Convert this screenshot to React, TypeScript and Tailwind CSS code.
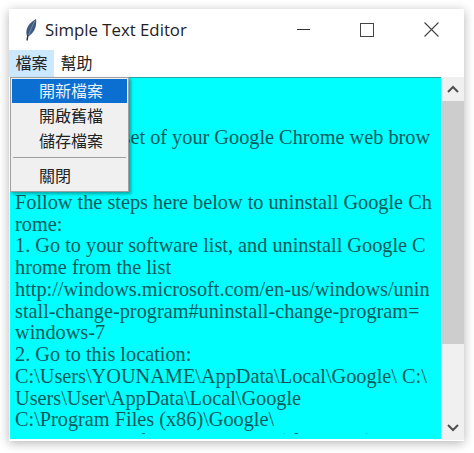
import React from 'react';

const lines = [
  'How to',
  'reinstall',
  'Do a clean reset of your Google Chrome web brow',
  'ser',
  '',
  'Follow the steps here below to uninstall Google Ch',
  'rome:',
  '1. Go to your software list, and uninstall Google C',
  'hrome from the list',
  'http://windows.microsoft.com/en-us/windows/unin',
  'stall-change-program#uninstall-change-program=',
  'windows-7',
  '2. Go to this location:',
  'C:\\Users\\YOUNAME\\AppData\\Local\\Google\\ C:\\',
  'Users\\User\\AppData\\Local\\Google',
  'C:\\Program Files (x86)\\Google\\',
  'And delete the folder "Chrome" (if it exists) there and',
];

const menuItems = ['開新檔案', '開啟舊檔', '儲存檔案'];

const Feather = () => (
  <svg width="14" height="22" viewBox="0 0 14 22">
    <path d="M3 17 C1 12 3 5 12 0 C13 6 11 13 5 17 Z" fill="#3f5a80" />
    <path d="M11 2 C8 7 6 12 4.500 17" stroke="#7f97b5" strokeWidth="0.8" fill="none" />
    <path d="M4 16 L3 21.500" stroke="#2a3442" strokeWidth="1.400" fill="none" />
  </svg>
);

const App: React.FC = () => {
  return (
    <div className="w-[474px] h-[453px] bg-white pt-[9px] pl-[9px] overflow-hidden">
      <div className="relative w-[455px] h-[432px] bg-white flex flex-col shadow-[0_2px_10px_rgba(0,0,0,0.3)] font-['Noto_Sans_CJK_TC','Noto_Sans_CJK_JP',sans-serif]">
        <div className="h-[41px] flex items-center shrink-0">
          <div className="ml-[15px] w-[14px] flex"><Feather /></div>
          <span className="ml-[7px] text-[16.800px] text-[#222] font-['Open_Sans','Noto_Sans',sans-serif]">Simple Text Editor</span>
          <div className="ml-auto flex items-center h-full mr-[1px]">
            <div className="w-[64px] flex justify-center"><div className="w-[13px] h-px bg-[#333]" /></div>
            <div className="w-[64px] flex justify-center"><div className="w-[14px] h-[14px] border border-[#444]" /></div>
            <div className="w-[64px] flex justify-center">
              <svg width="15" height="15" viewBox="0 0 15 15" stroke="#444" strokeWidth="1.100">
                <path d="M0.500 0.500 L14.500 14.500 M14.500 0.500 L0.500 14.500" />
              </svg>
            </div>
          </div>
        </div>
        <div className="h-[27px] flex items-stretch shrink-0 text-[16px] text-[#222]">
          <div className="w-[45px] bg-[#cce8ff] flex items-center justify-center pb-[3px]">檔案</div>
          <div className="ml-[1px] w-[43px] flex items-center justify-center pb-[3px]">幫助</div>
        </div>
        <div className="flex h-[363px] shrink-0">
          <div className="w-[431px] ml-px mb-px bg-[#00ffff] border-t border-[#1fa5a5] pl-[5px] pt-[5px] pb-[5px]">
            <div className="h-full overflow-hidden font-['Liberation_Serif',serif] text-[20.300px] leading-[21.750px] text-[#075a5c] whitespace-pre">
              {lines.map((line, i) => (
                <div key={i} className="h-[21.750px]">{line}</div>
              ))}
            </div>
          </div>
          <div className="w-[22px] ml-px bg-[#f0f0f0] flex flex-col items-stretch">
            <div className="h-[24px] flex items-center justify-center">
              <svg width="12" height="8" viewBox="0 0 12 8" fill="none" stroke="#505050" strokeWidth="2"><path d="M1 7 L6 2 L11 7" /></svg>
            </div>
            <div className="h-[243px] bg-[#cdcdcd]" />
            <div className="mt-auto h-[24px] flex items-center justify-center">
              <svg width="12" height="8" viewBox="0 0 12 8" fill="none" stroke="#505050" strokeWidth="2"><path d="M1 1 L6 6 L11 1" /></svg>
            </div>
          </div>
        </div>
        <div className="absolute left-px top-[68px] w-[119px] h-[115px] bg-[#f0f0f0] border border-[#a0a0a0] shadow-[2px_2px_3px_rgba(0,0,0,0.35)] px-px pt-px text-[16px] text-[#222]">
          {menuItems.map((item, i) => (
            <div key={item} className={i === 0 ? 'h-[24px] pl-[27px] pb-[2px] flex items-center bg-[#0a6fd1] text-[#e8f2fb]' : 'h-[25px] pl-[27px] pb-[2px] flex items-center'}>
              {item}
            </div>
          ))}
          <div className="mt-[4px] mb-[5px] mx-px h-px bg-[#a0a0a0]" />
          <div className="h-[25px] pl-[27px] pb-[2px] flex items-center">關閉</div>
        </div>
      </div>
    </div>
  );
};

export default App;
